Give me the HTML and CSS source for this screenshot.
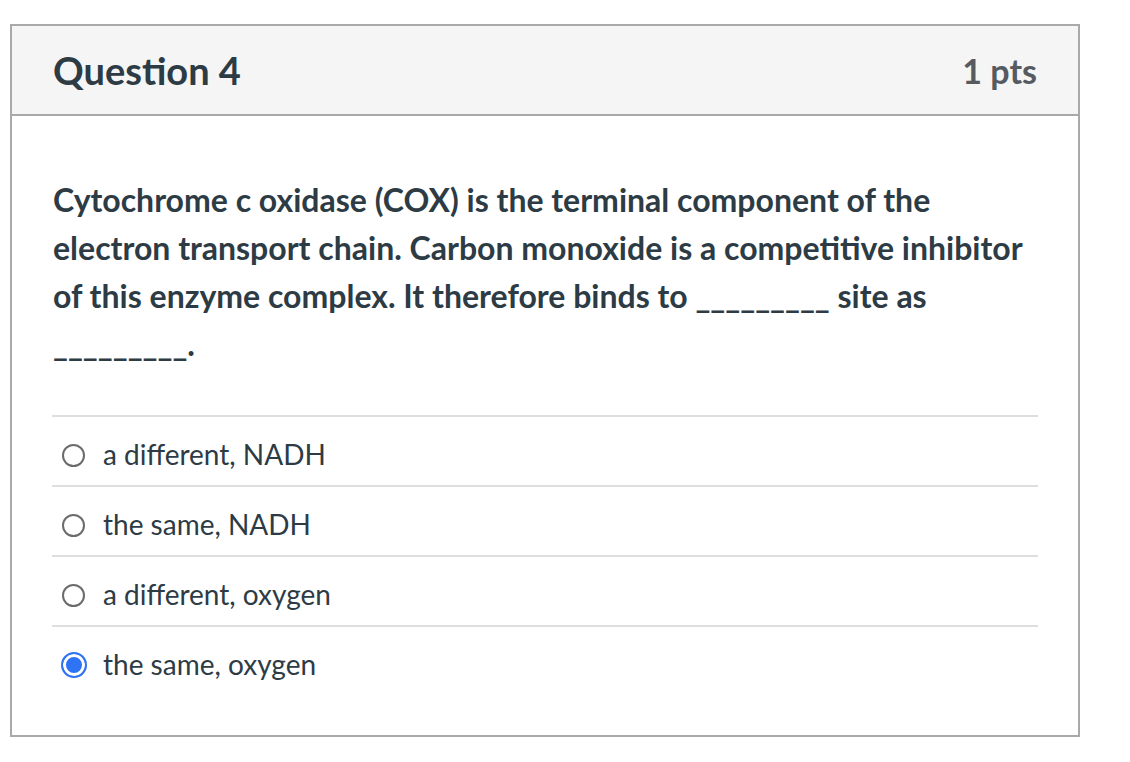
FILE: index.html
```html
<!DOCTYPE html>
<html>
<head>
<meta charset="utf-8">
<link rel="stylesheet" href="styles.css">
</head>
<body>
<div class="card">
  <div class="header">
    <div class="title">Question 4</div>
    <div class="pts">1 pts</div>
  </div>
  <div class="body">
    <p class="qtext">Cytochrome c oxidase (COX) is the terminal component of the electron transport chain. Carbon monoxide is a competitive inhibitor of this enzyme complex. It therefore binds to _________ site as _________.</p>
    <div class="answers">
      <label class="answer"><span class="radio"></span><span class="atext">a different, NADH</span></label>
      <label class="answer"><span class="radio"></span><span class="atext">the same, NADH</span></label>
      <label class="answer"><span class="radio"></span><span class="atext">a different, oxygen</span></label>
      <label class="answer"><span class="radio checked"></span><span class="atext">the same, oxygen</span></label>
    </div>
  </div>
</div>
</body>
</html>
```
FILE: styles.css
```css
html, body {
  margin: 0;
  padding: 0;
  background: #ffffff;
}
body {
  font-family: Lato, "Open Sans", sans-serif;
  color: #2d3b45;
}
.card {
  margin: 24px 0 0 10px;
  width: 1070px;
  height: 713px;
  box-sizing: border-box;
  border: 2px solid #a9a9a9;
}
.header {
  height: 88px;
  background: #f5f5f5;
  border-bottom: 2px solid #a9a9a9;
  display: flex;
  align-items: center;
  justify-content: space-between;
  padding: 0 41px;
}
.title {
  font-size: 38px;
  font-weight: 700;
  color: #2d3b45;
}
.pts {
  font-size: 34px;
  font-weight: 700;
  color: #555b61;
}
.body {
  padding: 60px 40px 0 40px;
}
.qtext {
  margin: 0 0 47px 0;
  padding-left: 1px;
  font-size: 32px;
  font-weight: 700;
  line-height: 48px;
}
.answers {
  display: flex;
  flex-direction: column;
}
.answer {
  height: 70px;
  border-top: 2px solid #dedede;
  display: flex;
  align-items: center;
  padding-left: 10px;
  padding-top: 6px;
  box-sizing: border-box;
}
.radio {
  width: 23px;
  height: 23px;
  box-sizing: border-box;
  border: 2px solid #6b6b6b;
  border-radius: 50%;
  margin-right: 18px;
  margin-top: 2px;
}
.radio.checked {
  border: 2px solid #2f73f5;
  background: #2f73f5;
  box-shadow: inset 0 0 0 3px #ffffff;
  width: 26px;
  height: 26px;
  margin-left: -1px;
  margin-right: 16px;
}
.atext {
  font-size: 28px;
  font-weight: 400;
}
```
